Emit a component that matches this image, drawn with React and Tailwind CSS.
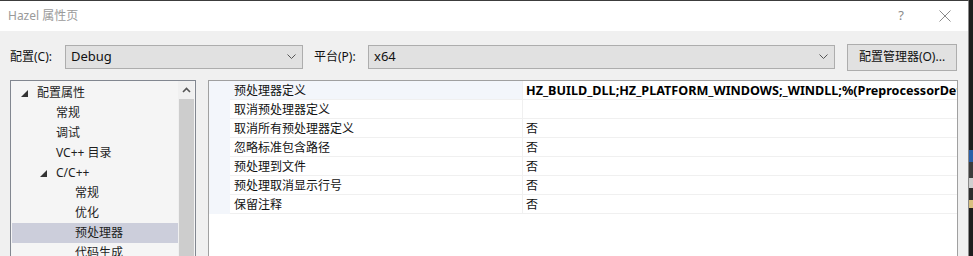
import React from 'react';

const font = { fontFamily: '"Noto Sans", "Noto Sans CJK SC", sans-serif' };

const tree = [
  { label: '配置属性', indent: 'pl-[25px]', arrow: true },
  { label: '常规', indent: 'pl-[44px]' },
  { label: '调试', indent: 'pl-[44px]' },
  { label: 'VC++ 目录', indent: 'pl-[44px]' },
  { label: 'C/C++', indent: 'pl-[44px]', arrow: true },
  { label: '常规', indent: 'pl-[63px]' },
  { label: '优化', indent: 'pl-[63px]' },
  { label: '预处理器', indent: 'pl-[63px]', selected: true },
  { label: '代码生成', indent: 'pl-[63px]' },
];

const props = [
  { name: '预处理器定义', value: 'HZ_BUILD_DLL;HZ_PLATFORM_WINDOWS;_WINDLL;%(PreprocessorDefinitions)', bold: true, focus: true },
  { name: '取消预处理器定义', value: '' },
  { name: '取消所有预处理器定义', value: '否' },
  { name: '忽略标准包含路径', value: '否' },
  { name: '预处理到文件', value: '否' },
  { name: '预处理取消显示行号', value: '否' },
  { name: '保留注释', value: '否' },
];

function Chevron() {
  return (
    <svg width="9" height="6" viewBox="0 0 9 6" className="shrink-0">
      <path d="M0.5 0.5 L4.5 4.5 L8.5 0.5" fill="none" stroke="#555" strokeWidth="1" />
    </svg>
  );
}

function TreeArrow() {
  return (
    <svg width="7" height="7" viewBox="0 0 7 7" className="absolute -left-[16px] top-[6px]">
      <path d="M7 0 L7 7 L0 7 Z" fill="#333" />
    </svg>
  );
}

function Select({ value, className }) {
  return (
    <div className={`h-[24px] bg-[#e1e1e1] border border-[#adadad] flex items-center pl-[5px] pr-[6px] text-[13px] text-[#111] ${className}`}>
      <span className="flex-1">{value}</span>
      <Chevron />
    </div>
  );
}

export default function App() {
  return (
    <div className="w-[973px] h-[256px] bg-[#1e1e1e] overflow-hidden" style={font}>
      <div className="flex h-full">
        <div className="w-[969px] h-full border-t border-[#3c3c3c] border-r border-r-[#8a8a8a] bg-[#f0f0f0] flex flex-col">
          {/* title bar */}
          <div className="h-[30px] bg-white flex items-center pl-[8px] shrink-0">
            <span className="text-[12px] text-[#9a9a9a] flex-1">Hazel 属性页</span>
            <span className="text-[13px] text-[#8a8a8a] mr-[35px]">?</span>
            <svg width="12" height="12" viewBox="0 0 12 12" className="mr-[17px]">
              <path d="M0.5 0.5 L11.5 11.5 M11.5 0.5 L0.5 11.5" stroke="#8a8a8a" strokeWidth="1" />
            </svg>
          </div>

          {/* config row */}
          <div className="flex items-center h-[26px] mt-[13px] pl-[10px] text-[12px] text-[#111] shrink-0">
            <span className="w-[55px]">配置(C):</span>
            <Select value="Debug" className="w-[238px]" />
            <span className="ml-[11px] w-[54px]">平台(P):</span>
            <Select value="x64" className="w-[467px]" />
            <div className="ml-[12px] w-[110px] h-[27px] bg-[#e1e1e1] border border-[#adadad] flex items-center justify-center text-[12px]">
              配置管理器(O)...
            </div>
          </div>

          {/* panels */}
          <div className="flex mt-[10px] pl-[10px] flex-1 min-h-0">
            {/* tree */}
            <div className="w-[186px] h-full border border-[#828790] border-b-0 bg-[#f5f5f5] flex">
              <div className="flex-1 pt-[2px] text-[12px] text-[#1e1e1e]">
                {tree.map((t, i) => (
                  <div
                    key={i}
                    className={`h-[20px] leading-[20px] ml-[1px] ${t.indent} ${t.selected ? 'bg-[#cccedb]' : ''}`}
                  >
                    <span className="relative">
                      {t.arrow && <TreeArrow />}
                      {t.label}
                    </span>
                  </div>
                ))}
              </div>
              <div className="w-[16px] mr-[1px] bg-[#f0f0f0] flex flex-col items-center">
                <div className="h-[18px] flex items-center justify-center">
                  <svg width="9" height="6" viewBox="0 0 9 6">
                    <path d="M1 5 L4.5 1.5 L8 5" fill="none" stroke="#555" strokeWidth="1.6" />
                  </svg>
                </div>
                <div className="w-[15px] flex-1 bg-[#cdcdcd]" />
              </div>
            </div>

            {/* property grid */}
            <div className="ml-[12px] w-[750px] h-full border border-[#a0a0a0] border-b-0 bg-white overflow-hidden">
              {props.map((p, i) => (
                <div key={i} className="flex h-[19px] text-[12px] text-[#111]">
                  <div className="w-[21px] bg-[#f3f6fb] shrink-0" />
                  <div
                    className={`w-[293px] shrink-0 pl-[4px] leading-[19px] border-b border-[#f0f0f0] border-r ${p.focus ? 'bg-[#f3f6fb]' : 'bg-white'}`}
                  >
                    {p.name}
                  </div>
                  <div
                    className={`flex-1 pl-[3px] leading-[19px] whitespace-nowrap overflow-hidden border-b border-[#f0f0f0] ${p.bold ? 'font-bold text-[12.6px] text-black' : ''}`}
                  >
                    {p.value}
                  </div>
                </div>
              ))}
            </div>
          </div>
        </div>
        <div className="flex-1 flex flex-col">
          <div className="h-[150px]" />
          <div className="h-[12px] bg-[#2a5fa8]" />
          <div className="h-[16px] bg-[#3c3c3c]" />
          <div className="h-[10px] bg-[#cfcfcf]" />
          <div className="h-[12px] bg-[#2d2d2d]" />
          <div className="h-[8px] bg-[#d8c080]" />
        </div>
      </div>
    </div>
  );
}
